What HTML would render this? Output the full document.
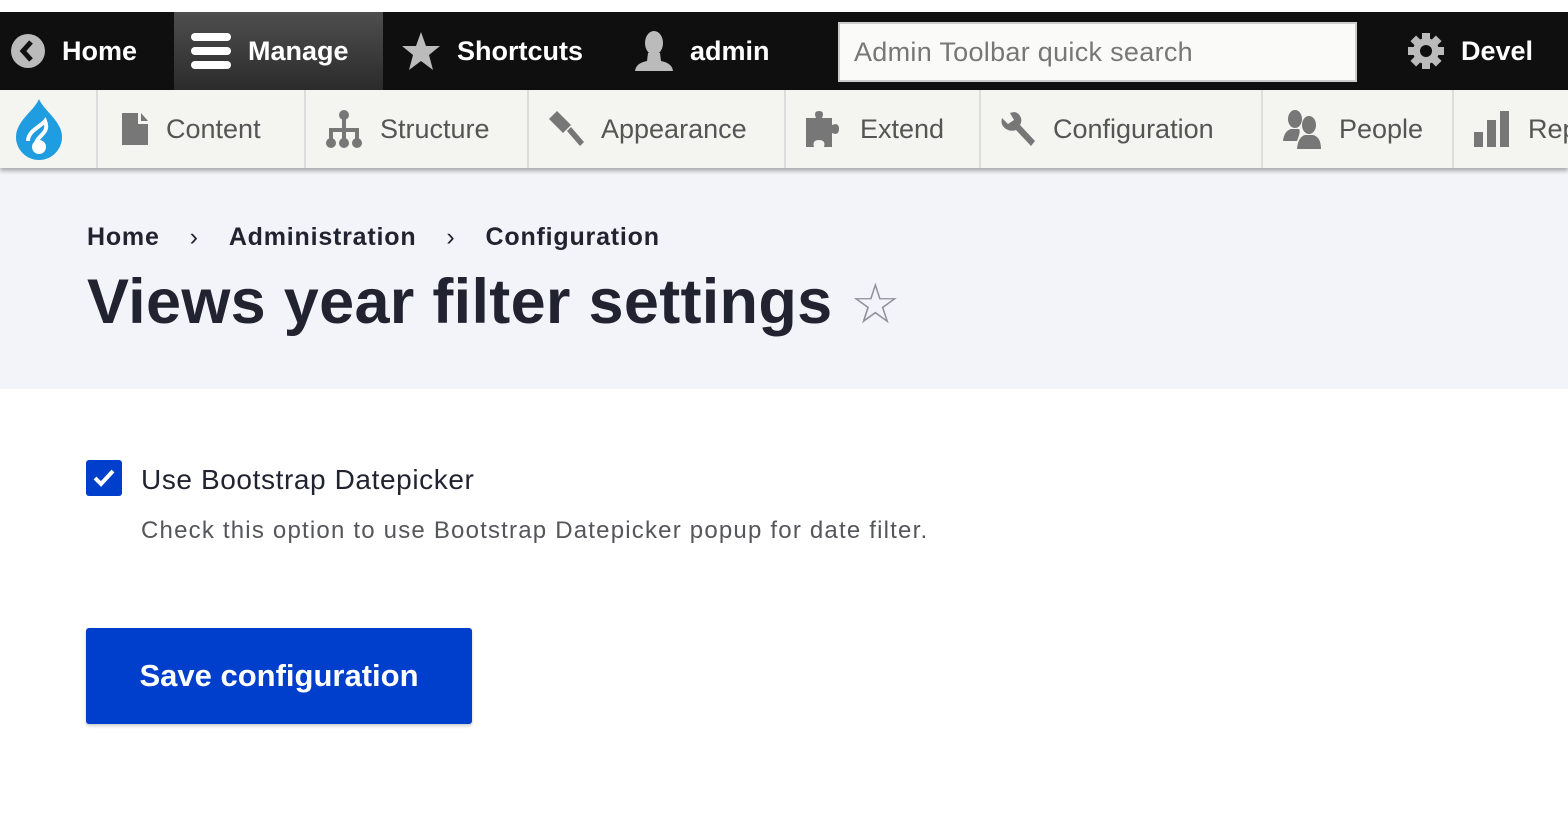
<!DOCTYPE html>
<html><head><style>
*{margin:0;padding:0;box-sizing:border-box}
body{width:1568px;height:826px;overflow:hidden;background:#fff;font-family:"Liberation Sans",sans-serif;position:relative}
.top{position:absolute;top:12px;left:0;width:1568px;height:78px;background:#0f0f0f}
.ti{position:absolute;top:0;height:78px;display:flex;align-items:center;color:#fff;font-weight:bold;font-size:27px}
.ti svg{margin-right:16px}
.man{background:linear-gradient(#4e4e4e,#2b2b2b)}
.search{position:absolute;left:838px;top:10px;width:519px;height:60px;background:#fafaf8;border:2px solid #ccc;color:#777;font-size:27px;padding:13px 14px;letter-spacing:.3px}
.sec{position:absolute;top:90px;left:0;width:1568px;height:78px;background:#f4f4f0;box-shadow:0 3px 4px rgba(0,0,0,.3);z-index:2}
.si{position:absolute;top:0;height:78px;display:flex;align-items:center;color:#555;font-size:27px;border-right:2px solid #ddd;padding-left:18px}
.si svg{margin-right:16px}
.hdr{position:absolute;top:168px;left:0;width:1568px;height:221px;background:#f3f4f9}
.bc{position:absolute;top:223px;left:87px;font-weight:bold;font-size:25px;color:#222330;letter-spacing:.8px}
.bc span{margin:0 30px;font-weight:normal}
h1{position:absolute;top:266px;left:87px;font-size:63px;font-weight:bold;color:#222330;letter-spacing:.3px}
.cb{position:absolute;left:86px;top:460px;width:36px;height:36px;background:#003ecc;border-radius:3px}
.lbl{position:absolute;left:141px;top:464px;font-size:28px;color:#222330;letter-spacing:.6px}
.desc{position:absolute;left:141px;top:517px;font-size:24px;color:#55565b;letter-spacing:1.2px}
.btn{position:absolute;left:86px;top:628px;width:386px;height:96px;background:#003ecc;border-radius:3px;color:#fff;font-weight:bold;font-size:31px;text-align:center;line-height:96px;box-shadow:0 2px 3px rgba(0,0,0,.2)}
</style></head><body>
<div class="top">
 <div class="ti" style="left:10px"><svg width="36" height="36" viewBox="0 0 36 36"><circle cx="18" cy="18" r="17" fill="#bbb"/><path d="M21 9 L13 18 L21 27" stroke="#111" stroke-width="5" fill="none"/></svg>Home</div>
 <div class="ti man" style="left:174px;width:209px;padding-left:16px"><svg width="42" height="40" viewBox="0 0 42 40"><rect x="1" y="2" width="40" height="8" rx="4" fill="#fff"/><rect x="1" y="16" width="40" height="8" rx="4" fill="#fff"/><rect x="1" y="30" width="40" height="8" rx="4" fill="#fff"/></svg>Manage</div>
 <div class="ti" style="left:401px"><svg width="40" height="40" viewBox="0 0 40 40"><path d="M20 1 L25 15 L39 15 L28 24 L32 39 L20 30 L8 39 L12 24 L1 15 L15 15Z" fill="#bbb"/></svg>Shortcuts</div>
 <div class="ti" style="left:634px"><svg width="40" height="40" viewBox="0 0 40 40"><ellipse cx="20" cy="12" rx="9" ry="12" fill="#bbb"/><path d="M14 22 L26 22 L27 30 Q38 32 39 40 L1 40 Q2 32 13 30Z" fill="#bbb"/></svg>admin</div>
 <div class="search">Admin Toolbar quick search</div>
 <div class="ti" style="left:1407px"><svg width="38" height="38" viewBox="0 0 38 38"><g fill="#bbb"><circle cx="19" cy="19" r="13"/><rect x="15" y="1" width="8" height="36"/><rect x="1" y="15" width="36" height="8"/><rect x="15" y="1" width="8" height="36" transform="rotate(45 19 19)"/><rect x="15" y="1" width="8" height="36" transform="rotate(-45 19 19)"/></g><circle cx="19" cy="19" r="6" fill="#0f0f0f"/></svg>Devel</div>
</div>
<div class="sec">
 <div class="si" style="left:0;width:98px;padding-left:14px"><svg width="50" height="64" viewBox="0 0 50 64"><path d="M25 2 C30 14 48 24 48 40 A23 23 0 0 1 2 40 C2 24 20 14 25 2Z" fill="#1f9de0"/><path d="M14 44 C14 34 26 30 31 24 C36 36 24 38 22 46" stroke="#fff" stroke-width="4" fill="none"/><circle cx="25" cy="50" r="7" fill="#fff"/></svg></div>
 <div class="si" style="left:98px;width:208px;padding-left:22px"><svg width="30" height="34" viewBox="0 0 30 34"><path d="M2 1 L18 1 L18 12 L28 12 L28 33 L2 33Z M21 1 L28 9 L21 9Z" fill="#777"/></svg>Content</div>
 <div class="si" style="left:306px;width:223px"><svg width="40" height="38" viewBox="0 0 40 38"><g fill="#777"><circle cx="20" cy="5" r="5"/><rect x="18" y="5" width="4" height="26"/><rect x="5" y="18" width="30" height="4"/><rect x="5" y="18" width="4" height="14"/><rect x="31" y="18" width="4" height="14"/><circle cx="7" cy="33" r="5"/><circle cx="20" cy="33" r="5"/><circle cx="33" cy="33" r="5"/></g></svg>Structure</div>
 <div class="si" style="left:529px;width:257px"><svg width="38" height="38" viewBox="0 0 38 38"><g fill="#777"><path d="M10 1 L24 15 L16 23 L2 9Z"/><path d="M20 21 L24 17 L37 32 L33 36Z"/></g></svg>Appearance</div>
 <div class="si" style="left:786px;width:195px"><svg width="40" height="38" viewBox="0 0 40 38"><path d="M2 8 L12 8 Q9 1 15 1 Q21 1 18 8 L28 8 L28 15 Q35 12 35 19 Q35 26 28 23 L28 37 L20 37 Q22 30 15 30 Q8 30 10 37 L2 37Z" fill="#777"/></svg>Extend</div>
 <div class="si" style="left:981px;width:282px"><svg width="38" height="38" viewBox="0 0 38 38"><path d="M3 8 L9 14 L15 10 L11 3 Q19 0 22 8 Q23 12 21 15 L36 31 L32 36 L17 20 Q12 22 7 19 Q1 15 3 8Z" fill="#777"/></svg>Configuration</div>
 <div class="si" style="left:1263px;width:191px"><svg width="42" height="40" viewBox="0 0 42 40"><g fill="#777"><ellipse cx="14" cy="10" rx="7" ry="9"/><path d="M2 32 Q3 22 10 20 L18 20 Q20 22 16 32Z"/><ellipse cx="28" cy="16" rx="7" ry="9"/><path d="M16 40 Q17 28 24 26 L32 26 Q40 28 40 40Z"/></g></svg>People</div>
 <div class="si" style="left:1454px;width:200px;border:none"><svg width="40" height="38" viewBox="0 0 40 38"><g fill="#777"><rect x="2" y="22" width="9" height="15"/><rect x="15" y="10" width="9" height="27"/><rect x="28" y="1" width="9" height="36"/></g></svg>Rep</div>
</div>
<div class="hdr"></div>
<div class="bc">Home<span>›</span>Administration<span>›</span>Configuration</div>
<h1>Views year filter settings <span style="font-weight:normal;color:#8e929c;font-size:56px">☆</span></h1>
<div class="cb"><svg width="36" height="36" viewBox="0 0 36 36"><path d="M9 18 L15 24 L27 11" stroke="#fff" stroke-width="4" fill="none"/></svg></div>
<div class="lbl">Use Bootstrap Datepicker</div>
<div class="desc">Check this option to use Bootstrap Datepicker popup for date filter.</div>
<div class="btn">Save configuration</div>
</body></html>
